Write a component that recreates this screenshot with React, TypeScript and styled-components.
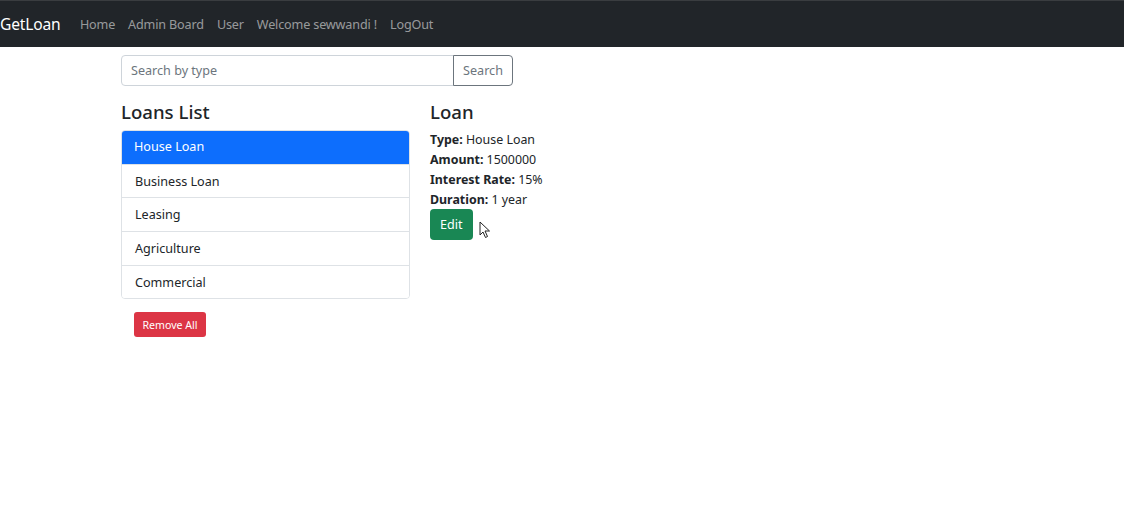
import React from "react";
import styled, { createGlobalStyle } from "styled-components";

const Global = createGlobalStyle`
  html, body { margin: 0; padding: 0; background: #fff; }
  body { font-family: "Noto Sans", "Open Sans", sans-serif; color: #212529; font-size: 12.6px; }
  * { box-sizing: border-box; }
`;

const Nav = styled.nav`
  height: 47px;
  background: #212529;
  display: flex;
  align-items: center;
  padding-left: 0;
  border-top: 1px solid #3a3d40;
`;
const Brand = styled.a`
  color: #fff;
  font-size: 15.6px;
  margin-right: 13px;
  letter-spacing: -0.2px;
`;
const NavLinks = styled.div`
  display: flex;
`;
const NavLink = styled.a`
  color: rgba(255, 255, 255, 0.55);
  font-size: 12.6px;
  padding: 0 6.5px;
  letter-spacing: -0.15px;
`;

const Main = styled.div`
  padding-left: 121px;
  padding-top: 8px;
`;
const SearchRow = styled.div`
  display: flex;
  width: 392px;
  height: 31px;
`;
const SearchInput = styled.input`
  flex: 1;
  border: 1px solid #ced4da;
  border-radius: 4px 0 0 4px;
  padding: 0 9px;
  font-family: inherit;
  font-size: 12.6px;
  color: #212529;
  outline: none;
  &::placeholder { color: #6c757d; }
`;
const SearchButton = styled.button`
  width: 60px;
  border: 1px solid #6c757d;
  border-radius: 0 4px 4px 0;
  background: #fff;
  color: #6c757d;
  font-family: inherit;
  font-size: 12.6px;
  margin-left: -1px;
`;

const Columns = styled.div`
  display: flex;
  margin-top: 14px;
`;
const LeftCol = styled.div`
  width: 289px;
  margin-right: 20px;
`;
const RightCol = styled.div`
  display: flex;
  flex-direction: column;
  align-items: flex-start;
`;
const Heading = styled.h4`
  margin: 0 0 6px 0;
  font-size: 18.6px;
  font-weight: 500;
  line-height: 24px;
  color: #212529;
`;
const List = styled.ul`
  list-style: none;
  margin: 0;
  padding: 0;
  border: 1px solid #dee2e6;
  border-radius: 4px;
  overflow: hidden;
`;
const Item = styled.li<{ $active?: boolean }>`
  height: 33.7px;
  display: flex;
  align-items: center;
  padding: 0 13px;
  font-size: 12.6px;
  background: ${(p) => (p.$active ? "#0d6efd" : "#fff")};
  color: ${(p) => (p.$active ? "#fff" : "#212529")};
  margin: ${(p) => (p.$active ? "-1px -1px 0 -1px" : "0")};
  & + & { border-top: 1px solid #dee2e6; }
`;
const RemoveButton = styled.button`
  margin: 13px 0 0 13px;
  height: 25px;
  padding: 0 8.5px;
  border: none;
  border-radius: 3px;
  background: #dc3545;
  color: #fff;
  font-family: inherit;
  font-size: 10.6px;
`;
const Field = styled.div`
  line-height: 20px;
  font-size: 12.4px;
  b { font-weight: 700; }
`;
const EditRow = styled.div`
  position: relative;
  margin-top: -1px;
`;
const EditButton = styled.button`
  height: 31px;
  padding: 0 10px;
  border: none;
  border-radius: 4px;
  background: #198754;
  color: #fff;
  font-family: inherit;
  font-size: 12.6px;
`;
const Cursor = styled.svg`
  position: absolute;
  left: 49px;
  top: 12px;
`;

export default function App() {
  return (
    <>
      <Global />
      <Nav>
        <Brand>GetLoan</Brand>
        <NavLinks>
          <NavLink>Home</NavLink>
          <NavLink>Admin Board</NavLink>
          <NavLink>User</NavLink>
          <NavLink>Welcome sewwandi !</NavLink>
          <NavLink>LogOut</NavLink>
        </NavLinks>
      </Nav>
      <Main>
        <SearchRow>
          <SearchInput placeholder="Search by type" />
          <SearchButton>Search</SearchButton>
        </SearchRow>
        <Columns>
          <LeftCol>
            <Heading>Loans List</Heading>
            <List>
              <Item $active>House Loan</Item>
              <Item>Business Loan</Item>
              <Item>Leasing</Item>
              <Item>Agriculture</Item>
              <Item>Commercial</Item>
            </List>
            <RemoveButton>Remove All</RemoveButton>
          </LeftCol>
          <RightCol>
            <Heading>Loan</Heading>
            <Field><b>Type:</b> House Loan</Field>
            <Field><b>Amount:</b> 1500000</Field>
            <Field><b>Interest Rate:</b> 15%</Field>
            <Field><b>Duration:</b> 1 year</Field>
            <EditRow>
              <EditButton>Edit</EditButton>
              <Cursor width="12" height="18" viewBox="0 0 12 18">
                <path d="M1 1 L1 14 L4 11 L6.5 16.5 L8.5 15.5 L6 10 L10.5 10 Z" fill="#fff" stroke="#222" strokeWidth="1" strokeLinejoin="round" />
              </Cursor>
            </EditRow>
          </RightCol>
        </Columns>
      </Main>
    </>
  );
}
